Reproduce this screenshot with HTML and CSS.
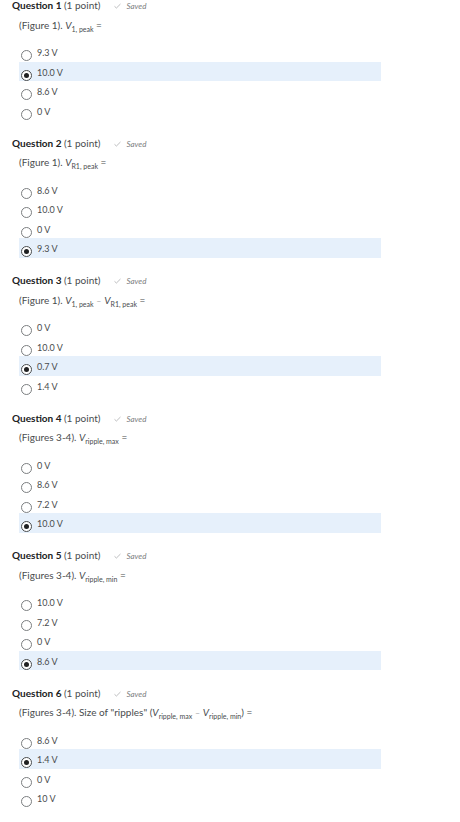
FILE: index.html
```html
<!DOCTYPE html>
<html>
<head>
<meta charset="utf-8">
<link rel="stylesheet" href="styles.css">
</head>
<body>
<div class="page">

<section class="q">
  <div class="qhead"><span class="qtitle">Question 1</span> <span class="qpts">(1 point)</span><span class="saved"><svg class="check" viewBox="0 0 8 6" width="7" height="6"><path d="M0.6 3.4 L2.8 5.3 L7.4 0.7" fill="none" stroke="#a9abad" stroke-width="0.9"/></svg>Saved</span></div>
  <div class="qtext">(Figure 1). <i class="v">V</i><sub>1, peak</sub> =</div>
  <div class="opts">
    <div class="opt"><span class="radio"></span><span class="lbl">9.3 V</span></div>
    <div class="opt sel"><span class="radio on"></span><span class="lbl">10.0 V</span></div>
    <div class="opt"><span class="radio"></span><span class="lbl">8.6 V</span></div>
    <div class="opt"><span class="radio"></span><span class="lbl">0 V</span></div>
  </div>
</section>

<section class="q">
  <div class="qhead"><span class="qtitle">Question 2</span> <span class="qpts">(1 point)</span><span class="saved"><svg class="check" viewBox="0 0 8 6" width="7" height="6"><path d="M0.6 3.4 L2.8 5.3 L7.4 0.7" fill="none" stroke="#a9abad" stroke-width="0.9"/></svg>Saved</span></div>
  <div class="qtext">(Figure 1). <i class="v">V</i><sub>R1, peak</sub> =</div>
  <div class="opts">
    <div class="opt"><span class="radio"></span><span class="lbl">8.6 V</span></div>
    <div class="opt"><span class="radio"></span><span class="lbl">10.0 V</span></div>
    <div class="opt"><span class="radio"></span><span class="lbl">0 V</span></div>
    <div class="opt sel"><span class="radio on"></span><span class="lbl">9.3 V</span></div>
  </div>
</section>

<section class="q">
  <div class="qhead"><span class="qtitle">Question 3</span> <span class="qpts">(1 point)</span><span class="saved"><svg class="check" viewBox="0 0 8 6" width="7" height="6"><path d="M0.6 3.4 L2.8 5.3 L7.4 0.7" fill="none" stroke="#a9abad" stroke-width="0.9"/></svg>Saved</span></div>
  <div class="qtext">(Figure 1). <i class="v">V</i><sub>1, peak</sub><span class="minus">−</span><i class="v">V</i><sub>R1, peak</sub> =</div>
  <div class="opts">
    <div class="opt"><span class="radio"></span><span class="lbl">0 V</span></div>
    <div class="opt"><span class="radio"></span><span class="lbl">10.0 V</span></div>
    <div class="opt sel"><span class="radio on"></span><span class="lbl">0.7 V</span></div>
    <div class="opt"><span class="radio"></span><span class="lbl">1.4 V</span></div>
  </div>
</section>

<section class="q">
  <div class="qhead"><span class="qtitle">Question 4</span> <span class="qpts">(1 point)</span><span class="saved"><svg class="check" viewBox="0 0 8 6" width="7" height="6"><path d="M0.6 3.4 L2.8 5.3 L7.4 0.7" fill="none" stroke="#a9abad" stroke-width="0.9"/></svg>Saved</span></div>
  <div class="qtext">(Figures 3-4). <i class="v">V</i><sub>ripple, max</sub> =</div>
  <div class="opts">
    <div class="opt"><span class="radio"></span><span class="lbl">0 V</span></div>
    <div class="opt"><span class="radio"></span><span class="lbl">8.6 V</span></div>
    <div class="opt"><span class="radio"></span><span class="lbl">7.2 V</span></div>
    <div class="opt sel"><span class="radio on"></span><span class="lbl">10.0 V</span></div>
  </div>
</section>

<section class="q">
  <div class="qhead"><span class="qtitle">Question 5</span> <span class="qpts">(1 point)</span><span class="saved"><svg class="check" viewBox="0 0 8 6" width="7" height="6"><path d="M0.6 3.4 L2.8 5.3 L7.4 0.7" fill="none" stroke="#a9abad" stroke-width="0.9"/></svg>Saved</span></div>
  <div class="qtext">(Figures 3-4). <i class="v">V</i><sub>ripple, min</sub> =</div>
  <div class="opts">
    <div class="opt"><span class="radio"></span><span class="lbl">10.0 V</span></div>
    <div class="opt"><span class="radio"></span><span class="lbl">7.2 V</span></div>
    <div class="opt"><span class="radio"></span><span class="lbl">0 V</span></div>
    <div class="opt sel"><span class="radio on"></span><span class="lbl">8.6 V</span></div>
  </div>
</section>

<section class="q">
  <div class="qhead"><span class="qtitle">Question 6</span> <span class="qpts">(1 point)</span><span class="saved"><svg class="check" viewBox="0 0 8 6" width="7" height="6"><path d="M0.6 3.4 L2.8 5.3 L7.4 0.7" fill="none" stroke="#a9abad" stroke-width="0.9"/></svg>Saved</span></div>
  <div class="qtext">(Figures 3-4). Size of "ripples" (<i class="v">V</i><sub>ripple, max</sub><span class="minus">−</span><i class="v">V</i><sub>ripple, min</sub>) =</div>
  <div class="opts">
    <div class="opt"><span class="radio"></span><span class="lbl">8.6 V</span></div>
    <div class="opt sel"><span class="radio on"></span><span class="lbl">1.4 V</span></div>
    <div class="opt"><span class="radio"></span><span class="lbl">0 V</span></div>
    <div class="opt"><span class="radio"></span><span class="lbl">10 V</span></div>
  </div>
</section>

</div>
</body>
</html>
```

FILE: styles.css
```css
html, body {
  margin: 0;
  padding: 0;
  background: #ffffff;
}
body {
  font-family: Lato, "Noto Sans", "Liberation Sans", sans-serif;
  color: #494c4e;
}
.page {
  padding-left: 12px;
  width: 369px;
}
.q {
  height: 137.5px;
}
.qhead {
  height: 10px;
  line-height: 10px;
  font-size: 10px;
  color: #202122;
  white-space: nowrap;
  display: flex;
  align-items: baseline;
}
.qtitle {
  font-weight: 700;
}
.qpts {
  margin-left: 2.5px;
  color: #494c4e;
}
.saved {
  margin-left: 14px;
  font-size: 8px;
  font-style: italic;
  color: #7a7c7e;
  display: inline-flex;
  align-items: center;
  gap: 5px;
}
.check {
  display: block;
}
.qtext {
  margin-top: 9.5px;
  padding-left: 7px;
  height: 22.5px;
  line-height: 10px;
  font-size: 10px;
  color: #494c4e;
  white-space: nowrap;
}
.v {
  font-style: italic;
}
sub {
  font-size: 7px;
  vertical-align: -3px;
  line-height: 0;
}
.minus {
  color: #9a9c9e;
  font-size: 8px;
  margin: 0 3px;
}
.opts {
  display: flex;
  flex-direction: column;
  padding-left: 7px;
}
.opt {
  height: 19.5px;
  display: flex;
  align-items: flex-start;
  padding-left: 2px;
  font-size: 9px;
  color: #494c4e;
}
.opt.sel {
  background: #e6f0fb;
}
.radio {
  box-sizing: border-box;
  width: 11px;
  height: 11px;
  margin-top: 8px;
  border: 1px solid #7b7e80;
  border-radius: 50%;
  background: #ffffff;
  display: flex;
  align-items: center;
  justify-content: center;
  flex: none;
}
.radio.on {
  border-color: #494c4e;
}
.radio.on::after {
  content: "";
  width: 5px;
  height: 5px;
  border-radius: 50%;
  background: #202122;
}
.lbl {
  margin-left: 5px;
  line-height: 10px;
  margin-top: 6px;
}
```
